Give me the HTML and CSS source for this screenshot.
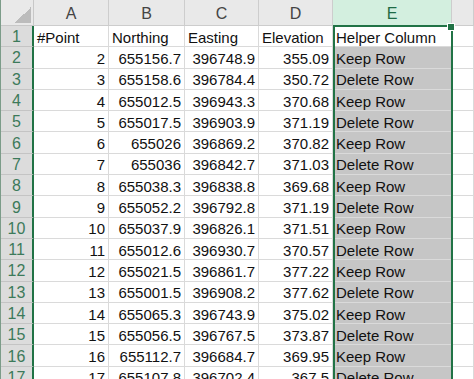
FILE: index.html
```html
<!DOCTYPE html>
<html lang="en">
<head>
    <meta charset="UTF-8">
    <title>Helper Column</title>
    <link rel="stylesheet" href="styles.css">
</head>
<body>
    <div class="sheet">
        <div class="corner"><span class="tri"></span></div>
        <div class="h">A</div><div class="h">B</div><div class="h">C</div><div class="h">D</div><div class="h hsel">E</div><div class="h"></div>

        <div class="rh">1</div><div class="t">#Point</div><div class="t">Northing</div><div class="t">Easting</div><div class="t">Elevation</div><div class="t active">Helper Column</div><div class="c"></div>
        <div class="rh">2</div><div class="n">2</div><div class="n">655156.7</div><div class="n">396748.9</div><div class="n">355.09</div><div class="t e">Keep Row</div><div class="c"></div>
        <div class="rh">3</div><div class="n">3</div><div class="n">655158.6</div><div class="n">396784.4</div><div class="n">350.72</div><div class="t e">Delete Row</div><div class="c"></div>
        <div class="rh">4</div><div class="n">4</div><div class="n">655012.5</div><div class="n">396943.3</div><div class="n">370.68</div><div class="t e">Keep Row</div><div class="c"></div>
        <div class="rh">5</div><div class="n">5</div><div class="n">655017.5</div><div class="n">396903.9</div><div class="n">371.19</div><div class="t e">Delete Row</div><div class="c"></div>
        <div class="rh">6</div><div class="n">6</div><div class="n">655026</div><div class="n">396869.2</div><div class="n">370.82</div><div class="t e">Keep Row</div><div class="c"></div>
        <div class="rh">7</div><div class="n">7</div><div class="n">655036</div><div class="n">396842.7</div><div class="n">371.03</div><div class="t e">Delete Row</div><div class="c"></div>
        <div class="rh">8</div><div class="n">8</div><div class="n">655038.3</div><div class="n">396838.8</div><div class="n">369.68</div><div class="t e">Keep Row</div><div class="c"></div>
        <div class="rh">9</div><div class="n">9</div><div class="n">655052.2</div><div class="n">396792.8</div><div class="n">371.19</div><div class="t e">Delete Row</div><div class="c"></div>
        <div class="rh">10</div><div class="n">10</div><div class="n">655037.9</div><div class="n">396826.1</div><div class="n">371.51</div><div class="t e">Keep Row</div><div class="c"></div>
        <div class="rh">11</div><div class="n">11</div><div class="n">655012.6</div><div class="n">396930.7</div><div class="n">370.57</div><div class="t e">Delete Row</div><div class="c"></div>
        <div class="rh">12</div><div class="n">12</div><div class="n">655021.5</div><div class="n">396861.7</div><div class="n">377.22</div><div class="t e">Keep Row</div><div class="c"></div>
        <div class="rh">13</div><div class="n">13</div><div class="n">655001.5</div><div class="n">396908.2</div><div class="n">377.62</div><div class="t e">Delete Row</div><div class="c"></div>
        <div class="rh">14</div><div class="n">14</div><div class="n">655065.3</div><div class="n">396743.9</div><div class="n">375.02</div><div class="t e">Keep Row</div><div class="c"></div>
        <div class="rh">15</div><div class="n">15</div><div class="n">655056.5</div><div class="n">396767.5</div><div class="n">373.87</div><div class="t e">Delete Row</div><div class="c"></div>
        <div class="rh">16</div><div class="n">16</div><div class="n">655112.7</div><div class="n">396684.7</div><div class="n">369.95</div><div class="t e">Keep Row</div><div class="c"></div>
        <div class="rh">17</div><div class="n">17</div><div class="n">655107.8</div><div class="n">396702.4</div><div class="n">367.5</div><div class="t e">Delete Row</div><div class="c"></div>

        <span class="selection"></span>
    </div>
</body>
</html>
```

FILE: styles.css
```css
* {
    margin: 0;
    padding: 0;
    box-sizing: border-box;
}
body {
    background-color: #ffffff;
    font-family: 'Liberation Sans', Arial, sans-serif;
    font-size: 15px;
    color: #111;
    overflow: hidden;
}
.sheet {
    position: relative;
    display: grid;
    grid-template-columns: 33px 75px 76px 74px 74px 119px 1fr;
    grid-template-rows: 26px repeat(17, 21.3px);
    border-left: 1px solid #7c9c89;
    height: 400px;
}
.sheet > div {
    border-right: 1px solid #dadada;
    border-bottom: 1px solid #dadada;
    display: flex;
    align-items: center;
    white-space: nowrap;
    overflow: hidden;
    padding-top: 2px;
}
.corner {
    background: #e9e9e9;
    justify-content: flex-end;
    align-items: flex-end !important;
    padding: 0 2px 2px 0;
    border-color: #c8c8c8 !important;
}
.tri {
    width: 16px;
    height: 16px;
    background: linear-gradient(to bottom right, transparent 50%, #bcbcbc 50%);
}
.sheet > .h {
    background: #e9e9e9;
    color: #444;
    justify-content: center;
    border-color: #cdcdcd;
    font-size: 16px;
}
.sheet > .hsel {
    background: #d3efdf;
    color: #1e6b45;
}
.sheet > .rh {
    background: #dcdcdc;
    color: #3c7a5a;
    justify-content: center;
    border-right: 2px solid #217346;
    border-bottom-color: #c4c4c4;
    font-size: 16px;
}
.t {
    padding-left: 3px;
}
.n {
    justify-content: flex-end;
    padding-right: 3px;
}
.e {
    background: #c6c6c6;
}
/* selected column outline */
.selection {
    position: absolute;
    left: 332px;
    top: 25px;
    width: 120px;
    bottom: 0;
    border: 2px solid #217346;
    pointer-events: none;
}
.selection::after {
    content: "";
    position: absolute;
    top: -4px;
    right: -4px;
    width: 6px;
    height: 6px;
    background: #217346;
    border: 1px solid #fff;
}
```
